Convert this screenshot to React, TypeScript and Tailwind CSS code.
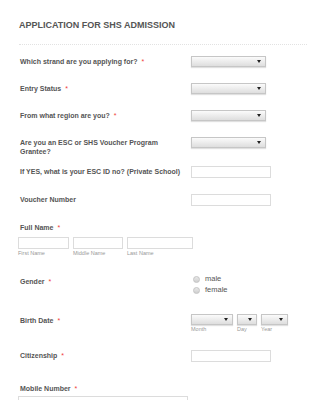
import React from 'react';

const Req = () => <span className="ml-[4px] text-[#f0403c] font-normal">*</span>;

function Select({ w }: { w: number }) {
  return (
    <div
      className="relative h-[11px] border border-[#c6c6c6] bg-gradient-to-b from-[#fbfbfb] to-[#dedede] shadow-[0_1px_1px_rgba(0,0,0,0.12)]"
      style={{ width: w }}
    >
      <span className="absolute right-[4px] top-[3px] h-0 w-0 border-l-[2px] border-r-[2px] border-t-[3px] border-l-transparent border-r-transparent border-t-[#222]" />
    </div>
  );
}

function Input({ w }: { w: number }) {
  return <div className="h-[12px] border border-[#dcdcdc] bg-white" style={{ width: w }} />;
}

function Row({ label, req, h, children }: { label: React.ReactNode; req?: boolean; h: number; children: React.ReactNode }) {
  return (
    <div className="flex items-start" style={{ height: h }}>
      <div className="w-[173px] pl-[2px] pt-[1px] text-[7px] font-bold leading-[9px] text-[#555]">
        {label}
        {req && <Req />}
      </div>
      <div>{children}</div>
    </div>
  );
}

export default function App() {
  return (
    <div className="min-h-[400px] w-[325px] overflow-hidden bg-white pl-[18px] font-['Liberation_Sans',Arial,sans-serif]">
      <div className="pt-[20px] pl-[1px] text-[9px] font-bold leading-[10px] text-[#555]">
        APPLICATION FOR SHS ADMISSION
      </div>
      <div className="mt-[14px] mr-[18px] ml-[1px] border-t border-dotted border-[#e2e2e2]" />

      <div className="mt-[11px]">
        <Row label="Which strand are you applying for?" req h={27}>
          <Select w={75} />
        </Row>
        <Row label="Entry Status" req h={27}>
          <Select w={75} />
        </Row>
        <Row label="From what region are you?" req h={27}>
          <Select w={75} />
        </Row>
        <Row label={<>Are you an ESC or SHS Voucher Program<br />Grantee?</>} h={29}>
          <Select w={75} />
        </Row>
        <Row label="If YES, what is your ESC ID no? (Private School)" h={28}>
          <Input w={80} />
        </Row>
        <Row label="Voucher Number" h={28}>
          <Input w={80} />
        </Row>

        <div className="h-[53px] pt-[1px]">
          <div className="pl-[2px] text-[7px] font-bold leading-[10px] text-[#555]">
            Full Name
            <Req />
          </div>
          <div className="mt-[4px] flex gap-[4px]">
            <div>
              <Input w={51} />
              <div className="mt-[1px] text-[5.5px] leading-[7px] text-[#999]">First Name</div>
            </div>
            <div>
              <Input w={50} />
              <div className="mt-[1px] text-[5.5px] leading-[7px] text-[#999]">Middle Name</div>
            </div>
            <div>
              <Input w={66} />
              <div className="mt-[1px] text-[5.5px] leading-[7px] text-[#999]">Last Name</div>
            </div>
          </div>
        </div>

        <div className="flex items-start h-[39px]">
          <div className="w-[173px] pl-[2px] pt-[2px] text-[7px] font-bold leading-[9px] text-[#555]">
            Gender
            <Req />
          </div>
          <div className="flex flex-col gap-[3px] pl-[2px]">
            {['male', 'female'].map((g) => (
              <div key={g} className="flex items-center h-[8px]">
                <span className="h-[7px] w-[7px] rounded-full border border-[#c4c4c4] bg-gradient-to-b from-[#e8e8e8] to-[#cfcfcf]" />
                <span className="ml-[5px] text-[7.5px] leading-[8px] text-[#555]">{g}</span>
              </div>
            ))}
          </div>
        </div>

        <div className="flex items-start h-[36px]">
          <div className="w-[173px] pl-[2px] pt-[2px] text-[7px] font-bold leading-[9px] text-[#555]">
            Birth Date
            <Req />
          </div>
          <div className="flex gap-[4px]">
            <div>
              <Select w={42} />
              <div className="mt-[1px] text-[5.5px] leading-[7px] text-[#999]">Month</div>
            </div>
            <div>
              <Select w={20} />
              <div className="mt-[1px] text-[5.5px] leading-[7px] text-[#999]">Day</div>
            </div>
            <div>
              <Select w={27} />
              <div className="mt-[1px] text-[5.5px] leading-[7px] text-[#999]">Year</div>
            </div>
          </div>
        </div>

        <Row label="Citizenship" req h={34}>
          <Input w={80} />
        </Row>

        <div className="pl-[2px] text-[7px] font-bold leading-[9px] text-[#555]">
          Mobile Number
          <Req />
        </div>
        <div className="mt-[3px]">
          <Input w={170} />
        </div>
      </div>
    </div>
  );
}
